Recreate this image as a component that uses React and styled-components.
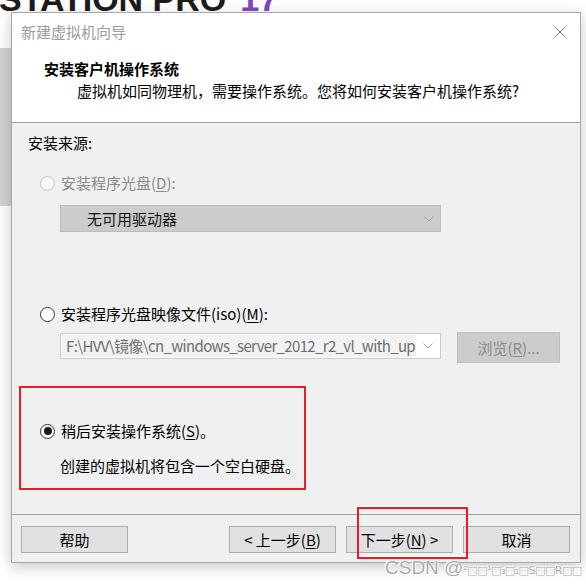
import React from "react";
import styled, { createGlobalStyle } from "styled-components";

const GlobalStyle = createGlobalStyle`
  html, body {
    margin: 0;
    padding: 0;
    background: #fff;
  }
  body {
    font-family: "Noto Sans CJK SC", "Noto Sans", sans-serif;
    -webkit-font-smoothing: antialiased;
  }
`;

const Desktop = styled.div`
  position: relative;
  width: 586px;
  height: 584px;
  overflow: hidden;
  background: #fff;
`;

const Banner = styled.div`
  position: absolute;
  left: -1px;
  top: -18px;
  font-family: "Liberation Sans", Arial, sans-serif;
  font-weight: 700;
  font-size: 34px;
  line-height: 1;
  color: #1c1c1c;
  white-space: nowrap;
`;

const Version = styled.span`
  color: #7b48c2;
  margin-left: 14px;
`;

const BackStrip = styled.div`
  position: absolute;
  left: 0;
  top: 48px;
  width: 11px;
  height: 158px;
  background: #d3d3d3;
`;

const Dialog = styled.div`
  position: absolute;
  left: 11px;
  top: 12px;
  width: 570px;
  height: 551px;
  box-sizing: border-box;
  border: 1px solid #a8a8a8;
  background: #f0f0f0;
  box-shadow: 0 4px 14px rgba(0, 0, 0, 0.22);
  display: flex;
  flex-direction: column;
  font-size: 15px;
  line-height: 20px;
  color: #000;
`;

const Top = styled.div`
  height: 110px;
  box-sizing: border-box;
  background: #fff;
  border-bottom: 1px solid #a0a0a0;
`;

const TitleBar = styled.div`
  height: 38px;
  display: flex;
  align-items: center;
  justify-content: space-between;
  padding: 0 14px 0 9px;
`;

const WindowTitle = styled.span`
  color: #9b9b9b;
`;

const CloseButton = styled.svg`
  width: 12px;
  height: 12px;
  stroke: #777;
  stroke-width: 1;
`;

const Heading = styled.div`
  margin-top: 8px;
  padding-left: 32px;
  font-weight: 700;
`;

const Subtitle = styled.div`
  margin-top: 2px;
  padding-left: 65px;
`;

const Body = styled.div`
  flex: 1;
  padding: 10px 0 0 16px;
  display: flex;
  flex-direction: column;
  align-items: flex-start;
`;

const RadioRow = styled.div`
  display: flex;
  align-items: center;
  gap: 6px;
  height: 20px;
  margin-top: ${(p) => p.$top || 0}px;
  padding-left: ${(p) => (p.$inset === undefined ? 12 : p.$inset)}px;
  color: ${(p) => (p.$disabled ? "#8a8a8a" : "#000")};
`;

const RadioDot = styled.span`
  width: 15px;
  height: 15px;
  box-sizing: border-box;
  border-radius: 50%;
  border: 1px solid ${(p) => (p.$disabled ? "#c2c2c2" : "#333")};
  background: ${(p) => (p.$disabled ? "#f7f7f7" : "#fff")};
  display: flex;
  align-items: center;
  justify-content: center;

  &::after {
    content: "";
    width: 8px;
    height: 8px;
    border-radius: 50%;
    background: #1a1a1a;
    display: ${(p) => (p.$checked ? "block" : "none")};
  }
`;

const Key = styled.u`
  text-underline-offset: 2px;
`;

const Combo = styled.div`
  margin: 12px 0 0 32px;
  width: 381px;
  height: 27px;
  box-sizing: border-box;
  border: 1px solid #bcbcbc;
  background: #cccccc;
  display: flex;
  align-items: center;
  padding-left: 26px;
`;

const ComboText = styled.span`
  flex: 1;
  color: #111;
`;

const Chevron = styled.svg`
  width: 10px;
  height: 6px;
  margin-right: 6px;
  fill: none;
  stroke: #a5a5a5;
  stroke-width: 1;
`;

const PathRow = styled.div`
  display: flex;
  align-items: flex-start;
  margin: 8px 0 0 32px;
`;

const PathInput = styled.div`
  margin-top: 1px;
  width: 381px;
  height: 26px;
  box-sizing: border-box;
  border: 1px solid #cacaca;
  background: #fff;
  display: flex;
  align-items: center;
`;

const PathText = styled.span`
  width: 354px;
  height: 22px;
  margin-left: 1px;
  padding-left: 4px;
  box-sizing: border-box;
  background: #f2f2f2;
  color: #6e6e6e;
  white-space: nowrap;
  overflow: hidden;
  line-height: 22px;
  letter-spacing: -0.65px;
`;

const PathChevron = styled(Chevron)`
  margin-left: 7px;
`;

const Button = styled.button`
  width: ${(p) => p.$w || 107}px;
  height: ${(p) => p.$h || 27}px;
  box-sizing: border-box;
  border: 1px solid ${(p) => (p.$disabled ? "#bfbfbf" : "#adadad")};
  background: ${(p) => (p.$disabled ? "#cccccc" : "#e1e1e1")};
  color: ${(p) => (p.$disabled ? "#8a8a8a" : "#000")};
  font: inherit;
  padding: 0;
  margin-left: ${(p) => p.$left || 0}px;
`;

const Highlight = styled.div`
  margin: 23px 0 0 -9px;
  width: 287px;
  height: 104px;
  box-sizing: border-box;
  border: 2px solid #e61e28;
  padding-top: 33px;
`;

const Note = styled.div`
  margin-top: 15px;
  padding-left: 39px;
`;

const Footer = styled.div`
  height: 48px;
  box-sizing: border-box;
  border-top: 1px solid #a0a0a0;
  padding: 11px 10px 0 9px;
  display: flex;
  align-items: flex-start;
  justify-content: space-between;
`;

const ButtonGroup = styled.div`
  position: relative;
  display: flex;
  gap: 10px;
`;

const FocusMark = styled.div`
  position: absolute;
  left: 128px;
  top: -19px;
  width: 111px;
  height: 52px;
  box-sizing: border-box;
  border: 2px solid #e61e28;
  pointer-events: none;
`;

const Watermark = styled.div`
  position: absolute;
  left: 385px;
  top: 557px;
  font-family: "Liberation Sans", Arial, sans-serif;
  font-size: 19px;
  line-height: 22px;
  color: rgba(140, 140, 140, 0.75);
  text-shadow: 0 0 1px #fff, 1px 1px 0 #fff, -1px -1px 0 #fff;
  white-space: nowrap;
`;

const WatermarkTail = styled.span`
  font-family: "DejaVu Sans", sans-serif;
  font-size: 11px;
  letter-spacing: -0.5px;
`;

const ChevronIcon = ({ as: Comp = Chevron }) => (
  <Comp viewBox="0 0 10 6">
    <polyline points="0.5,0.5 5,5 9.5,0.5" />
  </Comp>
);

export default function App() {
  return (
    <Desktop>
      <GlobalStyle />
      <Banner>
        STATION PRO<Version>17</Version>
      </Banner>
      <BackStrip />

      <Dialog>
        <Top>
          <TitleBar>
            <WindowTitle>新建虚拟机向导</WindowTitle>
            <CloseButton viewBox="0 0 12 12">
              <line x1="0.5" y1="0.5" x2="11.5" y2="11.5" />
              <line x1="11.5" y1="0.5" x2="0.5" y2="11.5" />
            </CloseButton>
          </TitleBar>
          <Heading>安装客户机操作系统</Heading>
          <Subtitle>虚拟机如同物理机，需要操作系统。您将如何安装客户机操作系统?</Subtitle>
        </Top>

        <Body>
          <div>安装来源:</div>

          <RadioRow $top={20} $disabled>
            <RadioDot $disabled />
            <span>
              安装程序光盘(<Key>D</Key>):
            </span>
          </RadioRow>
          <Combo>
            <ComboText>无可用驱动器</ComboText>
            <ChevronIcon />
          </Combo>

          <RadioRow $top={72}>
            <RadioDot />
            <span>
              安装程序光盘映像文件(iso)(<Key>M</Key>):
            </span>
          </RadioRow>
          <PathRow>
            <PathInput>
              <PathText>F:\HVV\镜像\cn_windows_server_2012_r2_vl_with_up</PathText>
              <ChevronIcon as={PathChevron} />
            </PathInput>
            <Button $w={103} $h={31} $left={16} $disabled>
              浏览(<Key>R</Key>)...
            </Button>
          </PathRow>

          <Highlight>
            <RadioRow $inset={19}>
              <RadioDot $checked />
              <span>
                稍后安装操作系统(<Key>S</Key>)。
              </span>
            </RadioRow>
            <Note>创建的虚拟机将包含一个空白硬盘。</Note>
          </Highlight>
        </Body>

        <Footer>
          <Button>帮助</Button>
          <ButtonGroup>
            <Button>
              &lt; 上一步(<Key>B</Key>)
            </Button>
            <Button>
              下一步(<Key>N</Key>) &gt;
            </Button>
            <Button>取消</Button>
            <FocusMark />
          </ButtonGroup>
        </Footer>
      </Dialog>

      <Watermark>
        CSDN @<WatermarkTail>²□□¹□₃□₁□S□□R□□</WatermarkTail>
      </Watermark>
    </Desktop>
  );
}
